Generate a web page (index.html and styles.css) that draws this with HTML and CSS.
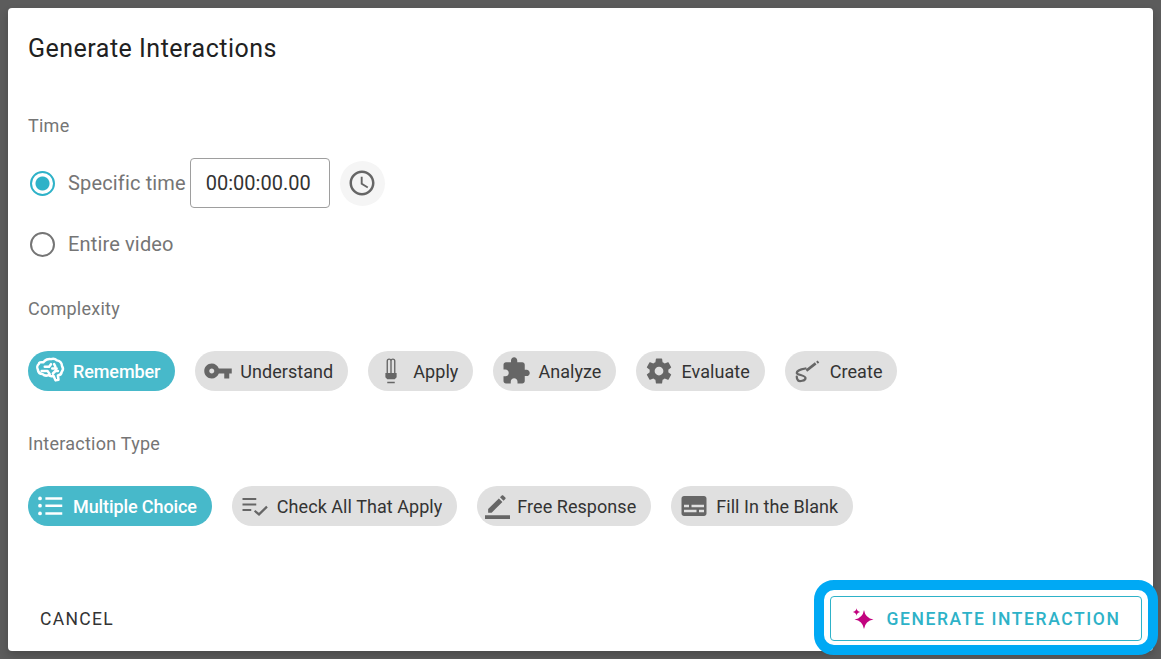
FILE: index.html
```html
<!DOCTYPE html>
<html lang="en">
<head>
    <meta charset="UTF-8">
    <title>Generate Interactions</title>
    <link rel="stylesheet" href="styles.css">
</head>
<body>
    <div class="dialog">
        <h2 class="title">Generate Interactions</h2>

        <div class="section-label time-label">Time</div>
        <div class="radio-row">
            <span class="radio on"></span>
            <span class="radio-text">Specific time</span>
            <div class="time-input">00:00:00.00</div>
            <span class="clock-btn">
                <svg viewBox="0 0 24 24"><path fill="#666" d="M11.990 2C6.470 2 2 6.480 2 12s4.470 10 9.990 10C17.520 22 22 17.520 22 12S17.520 2 11.990 2zM12 20c-4.420 0-8-3.580-8-8s3.580-8 8-8 8 3.580 8 8-3.580 8-8 8zm.5-13H11v6l5.250 3.150.75-1.230-4.500-2.670z"/></svg>
            </span>
        </div>
        <div class="radio-row second">
            <span class="radio"></span>
            <span class="radio-text">Entire video</span>
        </div>

        <div class="section-label complexity-label">Complexity</div>
        <div class="chips">
            <span class="chip active">
                <svg viewBox="0 0 24 24"><path fill="none" stroke="#fff" stroke-width="2" stroke-linecap="round" stroke-linejoin="round" d="M6 5C7 3 10 2 12 2.500c1.500-.5 3.500-.2 4.700 1 2.300.4 4 2.300 4.100 4.500.9 1.300.9 3.300-.2 4.600-.2 1.500-1.500 2.800-3.100 2.900l.5 3.500-2.400.5-1.600-3.700c-1.300.5-3 .3-4-.5-1.500.6-3.600.3-4.700-.8-2-.1-3.600-1.600-3.800-3.500-.9-1.500-.5-3.700.8-4.700C2.300 5.200 3.500 4.700 6 5zM7 8.500h3.500L12 6.500M4.500 12h4.700l1.800 2.500M13 10h3.500M14.500 6.500l1 2M13.500 14l2-2h2"/></svg>
                Remember
            </span>
            <span class="chip">
                <svg viewBox="0 0 24 24"><path fill="#666" d="M12.650 10C11.830 7.670 9.610 6 7 6c-3.310 0-6 2.690-6 6s2.690 6 6 6c2.610 0 4.830-1.670 5.650-4H17v4h4v-4h2v-4H12.650zM7 14c-1.100 0-2-.9-2-2s.9-2 2-2 2 .9 2 2-.9 2-2 2z"/></svg>
                Understand
            </span>
            <span class="chip">
                <svg viewBox="0 0 24 24"><path fill="none" stroke="#666" stroke-width="1.100" d="M9 14V4a1.500 1.500 0 0 1 3 0v10M12 14V4a1.500 1.500 0 0 1 3 0v10"/><path fill="#666" d="M7.500 13.500h9V17L15 18.500H9L7.500 17zM9 20.500h6v1.300H9z"/></svg>
                Apply
            </span>
            <span class="chip">
                <svg viewBox="0 0 24 24"><path fill="#666" d="M20.500 11H19V7c0-1.100-.9-2-2-2h-4V3.500C13 2.120 11.880 1 10.500 1S8 2.120 8 3.500V5H4c-1.100 0-1.990.9-1.990 2v3.800H3.500c1.490 0 2.700 1.210 2.700 2.700s-1.210 2.700-2.700 2.700H2V20c0 1.100.9 2 2 2h3.800v-1.500c0-1.490 1.210-2.700 2.700-2.700 1.490 0 2.700 1.210 2.700 2.700V22H17c1.100 0 2-.9 2-2v-4h1.500c1.380 0 2.500-1.120 2.500-2.500S21.880 11 20.500 11z"/></svg>
                Analyze
            </span>
            <span class="chip">
                <svg viewBox="0 0 24 24"><path fill="#666" d="M12 15.500A3.500 3.500 0 0 1 8.500 12 3.500 3.500 0 0 1 12 8.500a3.500 3.500 0 0 1 3.500 3.500 3.500 3.500 0 0 1-3.500 3.500m7.430-2.530c.04-.32.070-.64.070-.97 0-.33-.03-.66-.07-1l2.110-1.630c.19-.15.240-.42.120-.64l-2-3.460c-.12-.22-.39-.31-.61-.22l-2.490 1c-.52-.39-1.060-.73-1.690-.98l-.37-2.650A.506.506 0 0 0 14 2h-4c-.25 0-.46.180-.5.420l-.37 2.650c-.63.250-1.170.590-1.690.98l-2.490-1c-.22-.09-.49 0-.61.220l-2 3.460c-.13.220-.07.490.12.640L4.570 11c-.04.340-.07.670-.07 1 0 .33.030.65.070.97l-2.110 1.660c-.19.150-.25.420-.12.640l2 3.460c.12.220.39.300.61.220l2.490-1.010c.52.400 1.060.740 1.690.990l.37 2.650c.04.240.25.420.5.420h4c.25 0 .46-.18.5-.42l.37-2.650c.63-.26 1.170-.59 1.690-.99l2.490 1.010c.22.080.49 0 .61-.22l2-3.460c.12-.22.070-.49-.12-.64l-2.110-1.660z"/></svg>
                Evaluate
            </span>
            <span class="chip">
                <svg viewBox="0 0 24 24"><path fill="none" stroke="#666" stroke-width="1.800" stroke-linecap="round" d="M10 10C6 10.500 3 12 3 13.500 3 15 10 15.500 10 17.500 10 20 5 20.500 4 19.500 3.300 18.500 3 17.500 3 16.500"/><path fill="#666" d="M11.300 12.500l-1.200-1.700 7.400-5.800 1.300 1.700zM18.500 4.500l1.200-1 1.300 1.600-1.200 1z"/></svg>
                Create
            </span>
        </div>

        <div class="section-label type-label">Interaction Type</div>
        <div class="chips">
            <span class="chip active">
                <svg viewBox="0 0 24 24"><path fill="#fff" d="M7.500 5h13.500v1.900H7.500zM7.500 10.800h13.500v1.900H7.500zM7.500 17h13.500v1.900H7.500z"/><circle fill="#fff" cx="3.200" cy="5.900" r="1.500"/><circle fill="#fff" cx="3.200" cy="11.700" r="1.500"/><circle fill="#fff" cx="3.200" cy="17.900" r="1.500"/></svg>
                Multiple Choice
            </span>
            <span class="chip">
                <svg viewBox="0 0 24 24"><path fill="#666" d="M2 5.600h11v1.600H2zM2 9.900h11v1.600H2zM2 14.400h7v1.600H2z"/><path fill="none" stroke="#666" stroke-width="1.800" d="M11.700 15.800l3.500 2.900 6.400-6.200"/></svg>
                Check All That Apply
            </span>
            <span class="chip">
                <svg class="narrow" viewBox="0 0 24 24"><path fill="#666" d="M0 20.500h24V24H0zM3 14.500L13.300 4.200l3.400 3.400L6.400 17.900H3zM14.400 3.100l1.700-1.700c.4-.4 1-.4 1.400 0l2 2c.4.4.4 1 0 1.400l-1.700 1.700z"/></svg>
                Free Response
            </span>
            <span class="chip">
                <svg viewBox="0 0 24 24"><path fill="#666" fill-rule="evenodd" d="M4 4h16c1.100 0 2 .9 2 2v12c0 1.100-.9 2-2 2H4c-1.100 0-2-.9-2-2V6c0-1.100.9-2 2-2zM4 11v2h4v-2H4zM10 11v2h10v-2H10zM4 15v2h10v-2H4zM16 15v2h4v-2h-4z"/></svg>
                Fill In the Blank
            </span>
        </div>

        <div class="actions">
            <button class="btn cancel">Cancel</button>
            <button class="btn generate">
                <svg viewBox="0 0 24 24"><path fill="#c2037f" d="M12 3Q13.300 11.200 21.500 12.500 13.300 13.800 12 22 10.700 13.800 2.500 12.500 10.700 11.200 12 3zM4.500 1.300Q5 4.500 8.200 5 5 5.500 4.500 8.700 4 5.500.8 5 4 4.500 4.500 1.300z"/></svg>
                Generate Interaction
            </button>
        </div>
    </div>
</body>
</html>
```

FILE: styles.css
```css
* {
    box-sizing: border-box;
    margin: 0;
    padding: 0;
}
html, body {
    height: 100%;
}
body {
    background: #5c5c5c;
    font-family: Roboto, "Liberation Sans", sans-serif;
    padding: 8px;
    overflow: hidden;
}
.dialog {
    width: 1145px;
    height: 643px;
    background: #fff;
    border-radius: 4px;
    padding: 0 20px;
    display: flex;
    flex-direction: column;
    box-shadow: 0 4px 8px rgba(0,0,0,0.2);
}
.title {
    font-size: 25px;
    font-weight: 400;
    line-height: 32px;
    letter-spacing: 0.5px;
    color: #212121;
    margin-top: 25px;
}
.section-label {
    font-size: 18px;
    line-height: 24px;
    letter-spacing: 0.25px;
    color: #757575;
}
.time-label {
    margin-top: 49px;
}
.complexity-label {
    margin-top: 28px;
}
.type-label {
    margin-top: 41px;
}
.radio-row {
    display: flex;
    align-items: center;
    height: 50px;
    margin-top: 20px;
}
.radio-row.second {
    margin-top: 11px;
}
.radio {
    width: 25px;
    height: 25px;
    margin: 0 13px 0 2px;
    border: 2px solid #757575;
    border-radius: 50%;
    flex: none;
}
.radio.on {
    border-color: #2eb2c8;
    background: radial-gradient(circle, #2eb2c8 6.5px, transparent 7.5px);
}
.radio-text {
    font-size: 20px;
    letter-spacing: 0.15px;
    color: #757575;
}
.time-input {
    width: 140px;
    height: 50px;
    margin-left: 4px;
    border: 1px solid #9e9e9e;
    border-radius: 4px;
    font-size: 20px;
    line-height: 48px;
    padding-left: 15px;
    color: #333;
}
.clock-btn {
    width: 45px;
    height: 45px;
    margin-left: 10px;
    border-radius: 50%;
    background: #f5f5f5;
    display: flex;
    align-items: center;
    justify-content: center;
}
.clock-btn svg {
    width: 30px;
    height: 30px;
}
.chips {
    display: flex;
    gap: 20px;
    margin-top: 30px;
}
.chip {
    display: flex;
    align-items: center;
    gap: 7px;
    height: 40px;
    padding: 0 15px 0 8px;
    border-radius: 20px;
    background: #e0e0e0;
    font-size: 18px;
    letter-spacing: 0.05px;
    color: #333;
    white-space: nowrap;
}
.chip svg {
    width: 30px;
    height: 30px;
    flex: none;
    overflow: visible;
}
.chip svg.narrow {
    width: 25px;
    height: 25px;
}
.chip.active {
    background: #47b9ca;
    color: #fff;
    font-weight: 500;
    letter-spacing: -0.1px;
}
.actions {
    display: flex;
    justify-content: space-between;
    align-items: center;
    margin-top: auto;
    margin-bottom: 10px;
}
.btn {
    font-family: inherit;
    font-size: 17.5px;
    letter-spacing: 1.6px;
    text-transform: uppercase;
    background: #fff;
    border-radius: 4px;
    height: 45px;
}
.cancel {
    border: none;
    color: #333;
    padding: 0 12px;
    letter-spacing: 1.3px;
}
.generate {
    position: relative;
    width: 312px;
    margin-right: -9px;
    border: 1px solid #2eb2c8;
    color: #2eb2c8;
    font-weight: 500;
    display: flex;
    align-items: center;
    justify-content: center;
    gap: 11px;
}
.generate svg {
    width: 24px;
    height: 24px;
    flex: none;
}
.generate::after {
    content: "";
    position: absolute;
    top: -17px;
    bottom: -15px;
    left: -17px;
    right: -17px;
    border: 10px solid #00a9f4;
    border-radius: 20px;
}
```
